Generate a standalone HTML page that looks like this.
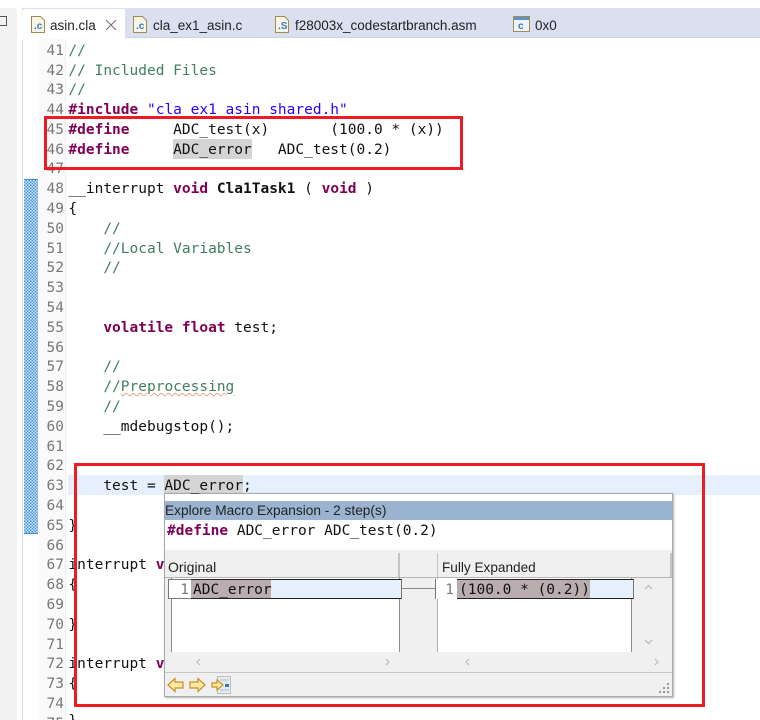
<!DOCTYPE html>
<html><head><meta charset="utf-8"><style>
html,body{margin:0;padding:0;background:#fff}
#p{position:relative;width:760px;height:720px;overflow:hidden;background:#fff;font-family:"DejaVu Sans Mono","Liberation Mono",monospace;font-size:14.5px;color:#111}
.a{position:absolute}
.ln{position:absolute;left:40px;width:24px;margin-top:1px;text-align:right;color:#787878;height:20px;line-height:20px;white-space:pre;font-size:14.5px}
.c{position:absolute;left:69px;margin-left:-.6px;margin-top:1px;height:20px;line-height:20px;white-space:pre}
.k{color:#7f0055;font-weight:bold}
.g{color:#3f7f5f}
.s{color:#2a00ff}
.b{font-weight:bold}
.t{position:absolute;top:16px;font:13.5px/20px "Liberation Sans",sans-serif;color:#222;white-space:pre}
.ic{position:absolute}
.u{font:13.5px/18px "Liberation Sans",sans-serif;color:#222;position:absolute;white-space:pre}
</style></head><body><div id="p">
<!-- left strip -->
<div class="a" style="left:0;top:8px;width:17px;height:712px;background:#f1f1f1;border-top-right-radius:4px"></div>
<div class="a" style="left:0;top:16px;width:7px;height:10px;border:1px solid #555;border-left:0;box-sizing:border-box"></div>
<div class="a" style="left:22px;top:38px;width:1px;height:682px;background:#dfe3ea"></div>
<div class="a" style="left:38px;top:38px;width:28px;height:682px;background:#fafafa"></div>
<div class="a" style="left:65px;top:38px;width:1px;height:682px;background:#f0f0f0"></div>
<!-- ruler -->
<div class="a" style="left:24px;top:179px;width:14px;height:355px;background-color:#8fc0ee;background-image:repeating-conic-gradient(#4a97e4 0 25%,#cfe4f8 0 50%);background-size:3px 3px;border-top:1px solid #3a8ae0;border-bottom:1px solid #3a8ae0;box-sizing:border-box"></div>
<!-- tabs -->
<div class="a" style="left:22px;top:8px;width:738px;height:30px;background:#dae0ef;border-bottom:1px solid #ccd2df;box-sizing:border-box"></div>
<div class="a" style="left:22px;top:9px;width:103px;height:30px;background:#fff;border-top-left-radius:3px"></div>
<svg class="ic" style="left:31px;top:16px" width="14" height="17"><path d="M.5.5H9.5L13.5 4.5V16.5H.5Z" fill="#f7f4e8" stroke="#a08a50"/><text x="3" y="13" font-family="Liberation Sans" font-weight="bold" font-size="10" fill="#3a78b5">.c</text></svg>
<div class="t" style="left:50px">asin.cla</div>
<svg class="ic" style="left:105px;top:19px" width="12" height="12"><path d="M1 1L11 11M11 1L1 11" stroke="#777" stroke-width="1.1"/></svg>
<svg class="ic" style="left:133px;top:16px" width="14" height="17"><path d="M.5.5H9.5L13.5 4.5V16.5H.5Z" fill="#f7f4e8" stroke="#a08a50"/><text x="3" y="13" font-family="Liberation Sans" font-weight="bold" font-size="10" fill="#3a78b5">.c</text></svg>
<div class="t" style="left:153px">cla_ex1_asin.c</div>
<svg class="ic" style="left:275px;top:16px" width="14" height="17"><path d="M.5.5H9.5L13.5 4.5V16.5H.5Z" fill="#f7f4e8" stroke="#a08a50"/><text x="3" y="13" font-family="Liberation Sans" font-weight="bold" font-size="10" fill="#3a78b5">.S</text></svg>
<div class="t" style="left:295px">f28003x_codestartbranch.asm</div>
<svg class="ic" style="left:513px;top:16px" width="18" height="17"><rect x=".5" y=".5" width="16" height="15" fill="#eef4fa" stroke="#a08a50"/><rect x="1" y="1" width="15" height="3" fill="#5f93c5"/><text x="5" y="13" font-family="Liberation Sans" font-weight="bold" font-size="10" fill="#3a78b5">c</text></svg>
<div class="t" style="left:535px">0x0</div>
<!-- current line -->
<div class="a" style="left:68px;top:475px;width:692px;height:20px;background:#e6f0fc"></div>
<div class="a" style="left:164px;top:475px;width:79px;height:20px;background:#d4d4d4"></div>
<div class="a" style="left:173px;top:139px;width:79px;height:20px;background:#d4d4d4"></div>
<!-- line numbers -->
<div class="ln" style="top:40px">41</div><div class="ln" style="top:60px">42</div><div class="ln" style="top:79px">43</div><div class="ln" style="top:99px">44</div><div class="ln" style="top:119px">45</div><div class="ln" style="top:139px">46</div><div class="ln" style="top:158px">47</div><div class="ln" style="top:178px">48</div><div class="ln" style="top:198px">49</div><div class="ln" style="top:218px">50</div><div class="ln" style="top:238px">51</div><div class="ln" style="top:257px">52</div><div class="ln" style="top:277px">53</div><div class="ln" style="top:297px">54</div><div class="ln" style="top:317px">55</div><div class="ln" style="top:337px">56</div><div class="ln" style="top:356px">57</div><div class="ln" style="top:376px">58</div><div class="ln" style="top:396px">59</div><div class="ln" style="top:416px">60</div><div class="ln" style="top:436px">61</div><div class="ln" style="top:455px">62</div><div class="ln" style="top:475px">63</div><div class="ln" style="top:495px">64</div><div class="ln" style="top:515px">65</div><div class="ln" style="top:535px">66</div><div class="ln" style="top:554px">67</div><div class="ln" style="top:574px">68</div><div class="ln" style="top:594px">69</div><div class="ln" style="top:614px">70</div><div class="ln" style="top:634px">71</div><div class="ln" style="top:653px">72</div><div class="ln" style="top:673px">73</div><div class="ln" style="top:693px">74</div><div class="ln" style="top:713px">75</div>
<!-- code -->
<div class="c g" style="top:40px">//</div>
<div class="c g" style="top:60px">// Included Files</div>
<div class="c g" style="top:79px">//</div>
<div class="c" style="top:99px"><span class="k">#include</span> <span class="s">"cla_ex1_asin_shared.h"</span></div>
<div class="c" style="top:119px"><span class="k">#define</span>     ADC_test(x)       (100.0 * (x))</div>
<div class="c" style="top:139px"><span class="k">#define</span>     ADC_error   ADC_test(0.2)</div>
<div class="c" style="top:178px">__interrupt <span class="k">void</span> <span class="b">Cla1Task1</span> ( <span class="k">void</span> )</div>
<div class="c" style="top:198px">{</div>
<div class="c g" style="top:218px">    //</div>
<div class="c g" style="top:238px">    //Local Variables</div>
<div class="c g" style="top:257px">    //</div>
<div class="c" style="top:317px">    <span class="k">volatile</span> <span class="k">float</span> test;</div>
<div class="c g" style="top:356px">    //</div>
<div class="c g" style="top:376px">    //<span style="text-decoration:underline wavy #e8a08c;text-decoration-thickness:1px">Preprocessing</span></div>
<div class="c g" style="top:396px">    //</div>
<div class="c" style="top:416px">    __mdebugstop();</div>
<div class="c" style="top:515px">}</div>
<div class="c" style="top:554px">interrupt <span class="k">v</span></div>
<div class="c" style="top:574px">{</div>
<div class="c" style="top:614px">}</div>
<div class="c" style="top:653px">interrupt <span class="k">v</span></div>
<div class="c" style="top:673px">{</div>
<div class="c" style="top:710px">}</div>
<!-- red boxes -->
<div class="a" style="left:44px;top:116px;width:419px;height:54px;border:3px solid #ed1c24;box-sizing:border-box"></div>
<div class="a" style="left:74px;top:463px;width:631px;height:244px;border:3px solid #ed1c24;box-sizing:border-box"></div>
<!-- popup -->
<div class="a" style="left:164px;top:493px;width:509px;height:204px;background:#fff;border:1px solid #a8a8a8;box-sizing:border-box;box-shadow:1px 1px 2px rgba(0,0,0,.3)"></div>
<!-- current line text sits above the popup edge so its underscore stays visible -->
<div class="c" style="top:475px">    test = ADC_error;</div>
<div class="a" style="left:165px;top:501px;width:507px;height:19px;background:#9ab3d0"></div>
<div class="u" style="left:165px;top:502px;font-size:13.7px;color:#222">Explore Macro Expansion - 2 step(s)</div>
<div class="a" style="left:167px;top:521px;height:20px;line-height:20px;white-space:pre"><span class="k">#define</span> ADC_error ADC_test(0.2)</div>
<div class="a" style="left:165px;top:550px;width:507px;height:146px;background:#f0f0f0"></div>
<div class="a" style="left:165px;top:577px;width:507px;height:1px;background:#b4b4b4"></div>
<div class="a" style="left:398px;top:553px;width:2px;height:24px;background:#c4c4c4"></div>
<div class="a" style="left:437px;top:553px;width:1px;height:24px;background:#c4c4c4"></div>
<div class="a" style="left:670px;top:553px;width:2px;height:24px;background:#c4c4c4"></div>
<div class="u" style="left:168px;top:558px;font-size:14px">Original</div>
<div class="u" style="left:442px;top:559px;font-size:13.6px">Fully Expanded</div>
<!-- left pane -->
<div class="a" style="left:171px;top:578px;width:229px;height:74px;background:#fff;border-left:1px solid #8c8c8c;border-right:1px solid #8c8c8c;box-sizing:border-box"></div>
<div class="a" style="left:168px;top:579px;width:23px;height:20px;background:#fff;border:1px solid #777;border-right:0;box-sizing:border-box"></div>
<div class="a" style="left:191px;top:579px;width:211px;height:20px;background:#e6f0fc;border-top:1px solid #222;border-bottom:1px solid #222;border-right:1px solid #777;box-sizing:border-box"></div>
<div class="a" style="left:191px;top:580px;width:80px;height:18px;background:#b9adb0"></div>
<div class="a" style="left:177px;top:580px;width:12px;height:20px;line-height:20px;color:#787878;font-size:14.5px;text-align:right">1</div>
<div class="a" style="left:193px;top:580px;height:20px;line-height:20px;white-space:pre">ADC_error</div>
<!-- connector -->
<div class="a" style="left:402px;top:588px;width:35px;height:1px;background:#8a8a8a"></div>
<!-- right pane -->
<div class="a" style="left:437px;top:578px;width:195px;height:74px;background:#fff;border-left:1px solid #b0b0b0;border-right:1px solid #8c8c8c;box-sizing:border-box"></div>
<div class="a" style="left:435px;top:579px;width:22px;height:20px;background:#fff;border-left:1px solid #777;box-sizing:border-box"></div>
<div class="a" style="left:457px;top:579px;width:177px;height:20px;background:#e6f0fc;border-top:1px solid #222;border-bottom:1px solid #222;border-right:1px solid #777;box-sizing:border-box"></div>
<div class="a" style="left:457px;top:580px;width:133px;height:18px;background:#b9adb0"></div>
<div class="a" style="left:442px;top:580px;width:12px;height:20px;line-height:20px;color:#787878;font-size:14.5px;text-align:right">1</div>
<div class="a" style="left:459px;top:580px;height:20px;line-height:20px;white-space:pre">(100.0 * (0.2))</div>
<!-- scroll arrows -->
<svg class="a" style="left:165px;top:578px" width="508" height="119" fill="none" stroke="#b8b8b8" stroke-width="1.2">
<path d="M480 11L483.5 7.5L487 11M480 62L483.5 65.5L487 62"/>
<path d="M35 81L32 84L35 87M221 81L224 84L221 87M304 81L301 84L304 87M490 81L493 84L490 87"/>
</svg>
<div class="a" style="left:165px;top:672px;width:507px;height:1px;background:#c8c8c8"></div>
<!-- toolbar icons -->
<svg class="a" style="left:166px;top:675px" width="66" height="20">
<path d="M2 10L9 3.5V7H17V13H9V16.5Z" fill="#fde9a0" stroke="#c98f2a" stroke-width="1.2"/>
<path d="M39 10L32 3.5V7H24V13H32V16.5Z" fill="#fde9a0" stroke="#c98f2a" stroke-width="1.2"/>
<rect x="51.5" y="1.5" width="13" height="17" fill="#e4ecf3" stroke="#b5b5a5" stroke-width=".8"/>
<path d="M54 5H63M54 15H63" stroke="#a9bccd"/>
<rect x="59" y="9" width="4" height="3" fill="#3f78b5"/>
<path d="M57 10L51 5V8H46V12H51V15Z" fill="#fde9a0" stroke="#c98f2a" stroke-width="1.2"/>
</svg>
<!-- grip -->
<svg class="a" style="left:658px;top:682px" width="13" height="13" fill="#999"><rect x="9" y="1" width="2" height="2"/><rect x="5" y="5" width="2" height="2"/><rect x="9" y="5" width="2" height="2"/><rect x="1" y="9" width="2" height="2"/><rect x="5" y="9" width="2" height="2"/><rect x="9" y="9" width="2" height="2"/></svg>
</div></body></html>
